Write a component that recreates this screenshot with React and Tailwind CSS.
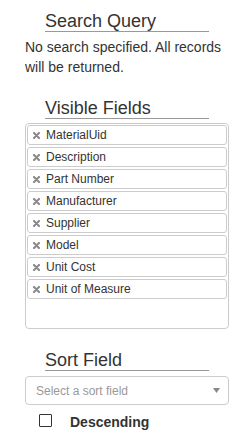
import { useState } from "react";

const FIELDS = [
  "MaterialUid",
  "Description",
  "Part Number",
  "Manufacturer",
  "Supplier",
  "Model",
  "Unit Cost",
  "Unit of Measure",
];

function CloseIcon() {
  return (
    <svg width="7" height="7" viewBox="0 0 7 7" className="shrink-0">
      <path d="M1 1L6 6M6 1L1 6" stroke="#8a8a8a" strokeWidth="2.1" strokeLinecap="round" />
    </svg>
  );
}

function Heading({ children, className = "" }) {
  return (
    <h4
      className={
        "ml-[20px] w-[164px] text-[18px] leading-[20px] font-normal border-b border-[#999] " +
        className
      }
    >
      {children}
    </h4>
  );
}

export default function App() {
  const [fields, setFields] = useState(FIELDS);
  const [descending, setDescending] = useState(false);

  return (
    <div className="w-[240px] h-[438px] bg-white text-[#333] font-['Liberation_Sans',Arial,sans-serif] pl-[25px] pr-[11px] overflow-hidden">
      {/* SEARCH QUERY */}
      <Heading className="pt-[11px] box-content">Search Query</Heading>
      <p className="mt-[5px] text-[14px] leading-[20px]">
        No search specified. All records will be returned.
      </p>

      {/* VISIBLE FIELDS */}
      <Heading className="mt-[21px]">Visible Fields</Heading>
      <div className="mt-[4px] h-[206px] border border-[#ccc] rounded-[4px] p-[1px] flex flex-col gap-[2px]">
        {fields.map((f) => (
          <div
            key={f}
            className="h-[20px] border border-[#ccc] rounded-[3px] bg-white flex items-center pl-[4px] text-[12px] leading-[18px]"
          >
            <button
              onClick={() => setFields(fields.filter((x) => x !== f))}
              className="w-[8px] flex items-center justify-center"
            >
              <CloseIcon />
            </button>
            <span className="ml-[6px]">{f}</span>
          </div>
        ))}
      </div>

      {/* SORT FIELD */}
      <Heading className="mt-[21px]">Sort Field</Heading>
      <div className="mt-[5px] h-[29px] border border-[#ccc] rounded-[4px] flex items-center justify-between pl-[10px] pr-[8px] text-[12px] text-[#999]">
        <span>Select a sort field</span>
        <svg width="7" height="5" viewBox="0 0 7 5">
          <path d="M0 0H7L3.5 5Z" fill="#888" />
        </svg>
      </div>

      <div
        className="mt-[7px] h-[20px] flex items-center pl-[14px] cursor-pointer"
        onClick={() => setDescending(!descending)}
      >
        <div className="w-[13px] h-[13px] border border-[#333] rounded-[1px] mb-[3px] flex items-center justify-center text-[10px]">
          {descending ? "✓" : ""}
        </div>
        <span className="ml-[18px] text-[14px] leading-[20px] font-bold">Descending</span>
      </div>
    </div>
  );
}
